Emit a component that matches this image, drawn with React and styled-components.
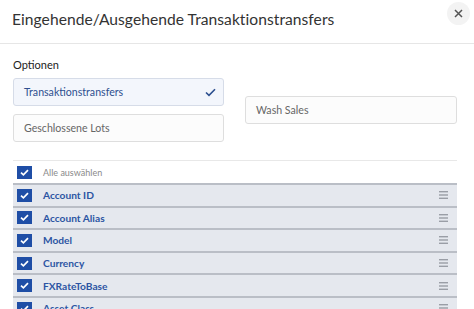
import React from "react";
import styled, { createGlobalStyle } from "styled-components";

const Global = createGlobalStyle`
  body {
    margin: 0;
    background: #fff;
    font-family: "Lato", "Open Sans", sans-serif;
  }
`;

const columns = ["Account ID", "Account Alias", "Model", "Currency", "FXRateToBase", "Asset Class"];

function Check() {
  return (
    <svg width="9" height="7" viewBox="0 0 9 7">
      <path d="M1 3.6 L3.4 5.8 L8 1.2" fill="none" stroke="#fff" strokeWidth="1.7" />
    </svg>
  );
}

function Handle() {
  return (
    <svg width="9" height="8" viewBox="0 0 9 8">
      <rect x="0" y="0" width="9" height="1.4" fill="#9a9ea6" />
      <rect x="0" y="3.3" width="9" height="1.4" fill="#9a9ea6" />
      <rect x="0" y="6.6" width="9" height="1.4" fill="#9a9ea6" />
    </svg>
  );
}

export default function App() {
  return (
    <Modal>
      <Global />
      <Header>
        <Title>Eingehende/Ausgehende Transaktionstransfers</Title>
        <Close>
          <svg width="9" height="9" viewBox="0 0 9 9">
            <path d="M1 1 L8 8 M8 1 L1 8" stroke="#555" strokeWidth="1.5" />
          </svg>
        </Close>
      </Header>
      <Body>
        <Label>Optionen</Label>
        <Options>
          <Column>
            <Option active>
              Transaktionstransfers
              <svg width="11" height="9" viewBox="0 0 11 9">
                <path d="M1 4.5 L4 7.4 L10 1.2" fill="none" stroke="#2c4f8f" strokeWidth="1.6" />
              </svg>
            </Option>
            <Option>Geschlossene Lots</Option>
          </Column>
          <Column center>
            <Option>Wash Sales</Option>
          </Column>
        </Options>
        <List>
          <Row>
            <Box><Check /></Box>
            <AllText>Alle auswählen</AllText>
          </Row>
          {columns.map((c) => (
            <Row item key={c}>
              <Box><Check /></Box>
              <ItemText>{c}</ItemText>
              <Handle />
            </Row>
          ))}
        </List>
      </Body>
    </Modal>
  );
}

const Modal = styled.div`
  width: 474px;
  height: 309px;
  overflow: hidden;
  background: #fff;
`;

const Header = styled.div`
  height: 44px;
  box-sizing: border-box;
  border-bottom: 1px solid #e6e6e6;
  display: flex;
  align-items: center;
  justify-content: space-between;
  padding: 0 4px 6px 12px;
`;

const Title = styled.div`
  font-size: 15.6px;
  color: #333;
  letter-spacing: 0.05px;
`;

const Close = styled.div`
  width: 23px;
  height: 23px;
  border-radius: 50%;
  background: #f3f3f3;
  display: flex;
  align-items: center;
  justify-content: center;
  align-self: flex-start;
  margin-top: 2px;
`;

const Body = styled.div`
  padding: 14px 17px 0 13px;
`;

const Label = styled.div`
  font-size: 11px;
  color: #222;
  line-height: 13px;
  margin-bottom: 7px;
`;

const Options = styled.div`
  display: grid;
  grid-template-columns: 211px 212px;
  column-gap: 21px;
`;

const Column = styled.div`
  display: flex;
  flex-direction: column;
  gap: 8px;
  justify-content: ${(p) => (p.center ? "center" : "flex-start")};
`;

const Option = styled.div`
  height: 28px;
  box-sizing: border-box;
  border: 1px solid ${(p) => (p.active ? "#d6dce8" : "#dedede")};
  border-radius: 3px;
  background: ${(p) => (p.active ? "#f3f6fc" : "#fcfcfc")};
  color: ${(p) => (p.active ? "#2e4f8f" : "#666")};
  font-size: 10.6px;
  display: flex;
  align-items: center;
  justify-content: space-between;
  padding: 0 7px 0 10px;
`;

const List = styled.div`
  margin-top: 18px;
  border-top: 1px solid #e8e8e8;
`;

const Row = styled.div`
  height: ${(p) => (p.item ? "22.6px" : "22px")};
  box-sizing: border-box;
  display: flex;
  align-items: center;
  padding: 0 9px 0 4px;
  background: ${(p) => (p.item ? "#e5e8ee" : "#fff")};
  border-top: ${(p) => (p.item ? "2px solid #babec6" : "none")};
`;

const Box = styled.div`
  width: 15px;
  height: 13px;
  background: #1f4ea6;
  display: flex;
  align-items: center;
  justify-content: center;
  margin-right: 11px;
`;

const AllText = styled.div`
  font-size: 9px;
  color: #8a8a8a;
`;

const ItemText = styled.div`
  flex: 1;
  font-size: 10.2px;
  font-weight: 700;
  color: #2c55a3;
`;
